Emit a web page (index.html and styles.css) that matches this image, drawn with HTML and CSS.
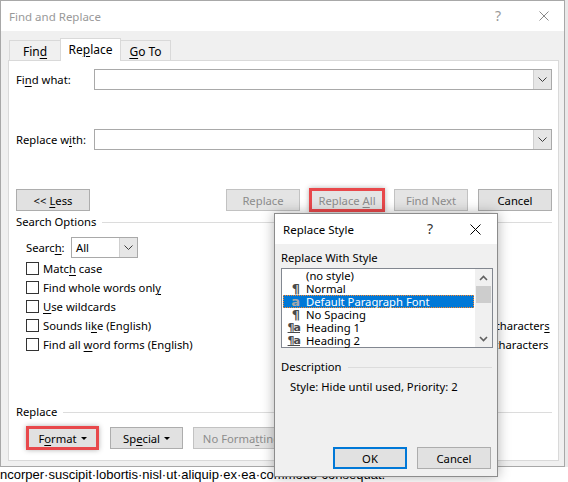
FILE: index.html
```html
<!DOCTYPE html>
<html lang="en">
<head>
    <meta charset="UTF-8">
    <meta name="viewport" content="width=device-width, initial-scale=1.0">
    <title>Find and Replace</title>
    <link rel="stylesheet" href="styles.css">
</head>
<body>
    <div class="window main-dialog">
        <div class="titlebar inactive">
            <span class="title">Find and Replace</span>
            <span class="caption-buttons">
                <span class="help">?</span>
                <svg class="close" width="10" height="10" viewBox="0 0 10 10"><path d="M0.5 0.5L9.5 9.5M9.5 0.5L0.5 9.5"/></svg>
            </span>
        </div>

        <div class="tabs">
            <div class="tab"><span>Fin<u>d</u></span></div>
            <div class="tab active"><span>Re<u>p</u>lace</span></div>
            <div class="tab"><span><u>G</u>o To</span></div>
        </div>

        <div class="panel">
            <div class="field-row first">
                <span class="field-label">Fi<u>n</u>d what:</span>
                <div class="combo">
                    <span class="combo-btn"><svg width="9" height="5" viewBox="0 0 9 5"><path d="M0.5 0.5L4.5 4.5L8.5 0.5"/></svg></span>
                </div>
            </div>
            <div class="field-row">
                <span class="field-label">Replace w<u>i</u>th:</span>
                <div class="combo">
                    <span class="combo-btn"><svg width="9" height="5" viewBox="0 0 9 5"><path d="M0.5 0.5L4.5 4.5L8.5 0.5"/></svg></span>
                </div>
            </div>

            <div class="button-row">
                <button class="btn">&lt;&lt; <u>L</u>ess</button>
                <div class="button-group">
                    <button class="btn disabled">Replace</button>
                    <button class="btn disabled highlight">Replace <u>A</u>ll</button>
                    <button class="btn disabled">Find Next</button>
                    <button class="btn">Cancel</button>
                </div>
            </div>

            <div class="group-title"><span>Search Options</span></div>
            <div class="search-row">
                <span class="search-label">Searc<u>h</u>:</span>
                <div class="select">
                    <span class="select-text">All</span>
                    <span class="combo-btn"><svg width="9" height="5" viewBox="0 0 9 5"><path d="M0.5 0.5L4.5 4.5L8.5 0.5"/></svg></span>
                </div>
            </div>
            <div class="options">
                <div class="check"><span class="box"></span><span>Matc<u>h</u> case</span></div>
                <div class="check"><span class="box"></span><span>Match prefi<u>x</u></span></div>
                <div class="check"><span class="box"></span><span>Find whole words onl<u>y</u></span></div>
                <div class="check"><span class="box"></span><span>Match suffi<u>t</u></span></div>
                <div class="check"><span class="box"></span><span><u>U</u>se wildcards</span></div>
                <div class="check"></div>
                <div class="check"><span class="box"></span><span>Sounds li<u>k</u>e (English)</span></div>
                <div class="check"><span class="box"></span><span>Ignore punctuation character<u>s</u></span></div>
                <div class="check"><span class="box"></span><span>Find all <u>w</u>ord forms (English)</span></div>
                <div class="check"><span class="box"></span><span>Ignore <u>w</u>hite-space characters</span></div>
            </div>

            <div class="group-title replace-title"><span>Replace</span></div>
            <div class="format-row">
                <button class="btn format highlight">F<u>o</u>rmat <span class="caret"></span></button>
                <button class="btn special">Sp<u>e</u>cial <span class="caret"></span></button>
                <button class="btn disabled no-format">No Forma<u>t</u>ting</button>
            </div>
        </div>
    </div>

    <div class="doc-line">ncorper·suscipit·lobortis·nisl·ut·aliquip·ex·ea·commodo·consequat.</div>

    <div class="window style-dialog">
        <div class="titlebar">
            <span class="title">Replace Style</span>
            <span class="caption-buttons">
                <span class="help">?</span>
                <svg class="close" width="11" height="11" viewBox="0 0 11 11"><path d="M0.5 0.5L10.5 10.5M10.5 0.5L0.5 10.5"/></svg>
            </span>
        </div>
        <div class="style-body">
            <div class="style-label">Replace With Style</div>
            <div class="listbox">
                <ul class="style-list">
                    <li><span class="ico"></span><span>(no style)</span></li>
                    <li><span class="ico para">¶</span><span>Normal</span></li>
                    <li class="selected"><span class="ico char">a</span><span>Default Paragraph Font</span></li>
                    <li><span class="ico para">¶</span><span>No Spacing</span></li>
                    <li><span class="ico linked">¶a</span><span>Heading 1</span></li>
                    <li><span class="ico linked">¶a</span><span>Heading 2</span></li>
                </ul>
                <div class="scrollbar">
                    <span class="arrow"><svg width="9" height="6" viewBox="0 0 9 6"><path d="M1 5L4.5 1.5L8 5"/></svg></span>
                    <span class="thumb"></span>
                    <span class="track"></span>
                    <span class="arrow"><svg width="9" height="6" viewBox="0 0 9 6"><path d="M1 1L4.5 4.5L8 1"/></svg></span>
                </div>
            </div>
            <div class="group-title desc-title"><span>Description</span></div>
            <div class="desc-text">Style: Hide until used, Priority: 2</div>
            <div class="dialog-buttons">
                <button class="btn default">OK</button>
                <button class="btn">Cancel</button>
            </div>
        </div>
    </div>
</body>
</html>
```

FILE: styles.css
```css
body {
    margin: 0;
    background-color: #e9e9e9;
    font-family: "Segoe UI", "Noto Sans", sans-serif;
    font-size: 11.25px;
    color: #000;
    overflow: hidden;
}
u {
    text-underline-offset: 2px;
}
.window {
    box-sizing: border-box;
    background: #f0f0f0;
}
.main-dialog {
    width: 565px;
    height: 467px;
    border: 1px solid #a8a8a8;
}
.titlebar {
    height: 30px;
    background: #fff;
    display: flex;
    align-items: center;
    padding-left: 8px;
    font-size: 11.5px;
}
.titlebar.inactive {
    color: #999;
}
.caption-buttons {
    margin-left: auto;
    display: flex;
    align-items: center;
    gap: 38px;
    padding-right: 15px;
}
.help {
    font-size: 14px;
    line-height: 14px;
}
.close path {
    stroke: #000;
    stroke-width: 1;
    fill: none;
}
.inactive .close path {
    stroke: #8a8a8a;
}

/* tabs */
.tabs {
    display: flex;
    align-items: flex-end;
    height: 22px;
    margin-top: 7px;
    padding-left: 8px;
}
.tab {
    box-sizing: border-box;
    height: 20px;
    width: 52px;
    border: 1px solid #d9d9d9;
    border-bottom: none;
    background: #f0f0f0;
    display: flex;
    align-items: center;
    justify-content: center;
    padding-top: 1px;
    font-size: 12px;
}
.tab + .tab {
    margin-left: -1px;
    width: 51px;
}
.tab.active {
    position: relative;
    z-index: 1;
    width: 61px;
    height: 23px;
    margin-bottom: -1px;
    background: #fff;
    padding-bottom: 2px;
}

/* panel */
.panel {
    box-sizing: border-box;
    margin-left: 7px;
    width: 551px;
    height: 401px;
    background: #fff;
    border: 1px solid #d9d9d9;
    padding: 8px 6px 0 7px;
}
.field-row {
    display: flex;
    align-items: center;
    margin-top: 39px;
}
.field-row.first {
    margin-top: 0;
}
.field-label {
    width: 78px;
}
.combo, .select {
    box-sizing: border-box;
    height: 21px;
    border: 1px solid #a9a9a9;
    background: #fff;
    display: flex;
    justify-content: flex-end;
}
.combo {
    flex: 1;
}
.combo-btn {
    width: 17px;
    background: #e6e6e6;
    border-left: 1px solid #cfcfcf;
    display: flex;
    align-items: center;
    justify-content: center;
}
.combo-btn path {
    fill: none;
    stroke: #3c3c3c;
}

/* buttons */
.btn {
    box-sizing: border-box;
    width: 74px;
    height: 22px;
    padding: 0;
    font: inherit;
    color: #000;
    background: #e1e1e1;
    border: 1px solid #adadad;
}
.btn.disabled {
    color: #8c8c8c;
    background: #e4e4e4;
    border-color: #c2c2c2;
}
.btn.default {
    border: 2px solid #0078d7;
}
.highlight {
    outline: 3px solid #e8484b;
    outline-offset: -2px;
    box-shadow: 0 0 5px 1px rgba(0, 0, 0, 0.3);
}
.button-row {
    display: flex;
    margin-top: 39px;
}
.button-group {
    margin-left: auto;
    display: flex;
    gap: 10px;
}

/* group titles with a rule */
.group-title {
    display: flex;
    align-items: center;
    line-height: 16px;
    margin-top: 3px;
}
.group-title::after {
    content: "";
    flex: 1;
    height: 1px;
    background: #dcdcdc;
    margin-left: 6px;
}
.search-row {
    display: flex;
    align-items: center;
    margin-top: 7px;
    padding-left: 10px;
}
.search-label {
    width: 45px;
}
.select {
    width: 67px;
}
.select-text {
    flex: 1;
    padding-left: 4px;
    line-height: 19px;
}
.options {
    display: grid;
    grid-template-columns: 346px 1fr;
    grid-auto-rows: 19px;
    margin-top: 1px;
    padding-left: 10px;
}
.check {
    display: flex;
    align-items: center;
    white-space: nowrap;
}
.box {
    box-sizing: border-box;
    width: 13px;
    height: 13px;
    border: 1px solid #333;
    background: #fff;
    margin-right: 4px;
}
.replace-title {
    margin-top: 50px;
}
.format-row {
    display: flex;
    margin-top: 7px;
    padding-left: 11px;
}
.format {
    width: 71px;
}
.special {
    width: 73px;
    margin-left: 12px;
}
.no-format {
    width: 97px;
    margin-left: 10px;
}
.caret {
    display: inline-block;
    vertical-align: middle;
    margin-left: 1px;
    border-left: 3px solid transparent;
    border-right: 3px solid transparent;
    border-top: 3px solid #000;
    position: relative;
    top: -1px;
}

/* document text behind the dialogs */
.doc-line {
    background: #fff;
    height: 15px;
    line-height: 15px;
    font-family: "Liberation Sans", Arial, sans-serif;
    font-size: 13px;
    white-space: nowrap;
    overflow: hidden;
}

/* Replace Style dialog, floating over the main one */
.style-dialog {
    position: absolute;
    left: 274px;
    top: 213px;
    width: 224px;
    height: 264px;
    border: 1px solid #8c8c8c;
    box-shadow: 0 0 12px rgba(0, 0, 0, 0.3);
    display: flex;
    flex-direction: column;
    z-index: 2;
}
.style-dialog .caption-buttons {
    gap: 37px;
    padding-right: 16px;
}
.style-dialog .help {
    color: #333;
}
.style-body {
    flex: 1;
    display: flex;
    flex-direction: column;
    padding: 0 5px 7px 6px;
}
.style-label {
    line-height: 16px;
    margin-top: 6px;
}
.listbox {
    box-sizing: border-box;
    width: 212px;
    height: 80px;
    margin-top: 2px;
    border: 1px solid #828790;
    background: #fff;
    display: flex;
}
.style-list {
    flex: 1;
    list-style: none;
    margin: 0;
    padding: 0 1px;
}
.style-list li {
    box-sizing: border-box;
    height: 13px;
    line-height: 13px;
    display: flex;
    align-items: center;
    white-space: nowrap;
}
.style-list li.selected {
    background: #0078d7;
    color: #fff;
    border: 1px dotted #ff8728;
}
.ico {
    width: 17px;
    margin-right: 6px;
    text-align: right;
    color: #4a4a4a;
}
.selected .ico {
    margin-left: -1px;
}
.ico.para {
    font-family: "DejaVu Sans", sans-serif;
    font-weight: bold;
    font-size: 13px;
}
.ico.char {
    color: #a8a8a8;
    font-family: "DejaVu Sans", sans-serif;
    font-weight: bold;
    font-size: 13px;
}
.ico.linked {
    font-family: "DejaVu Sans", sans-serif;
    font-weight: bold;
    font-size: 11px;
    letter-spacing: -1px;
    text-decoration: underline;
    text-underline-offset: 1px;
}
.scrollbar {
    width: 17px;
    background: #f0f0f0;
    display: flex;
    flex-direction: column;
}
.arrow {
    height: 17px;
    display: flex;
    align-items: center;
    justify-content: center;
}
.arrow path {
    fill: none;
    stroke: #606060;
    stroke-width: 1.6;
}
.thumb {
    height: 17px;
    margin: 0 1px;
    background: #cdcdcd;
}
.track {
    flex: 1;
}
.desc-title {
    margin-top: 11px;
}
.desc-text {
    line-height: 16px;
    margin-top: 4px;
    padding-left: 9px;
}
.dialog-buttons {
    margin-top: auto;
    display: flex;
    justify-content: flex-end;
    gap: 10px;
    padding-right: 1px;
}
```
